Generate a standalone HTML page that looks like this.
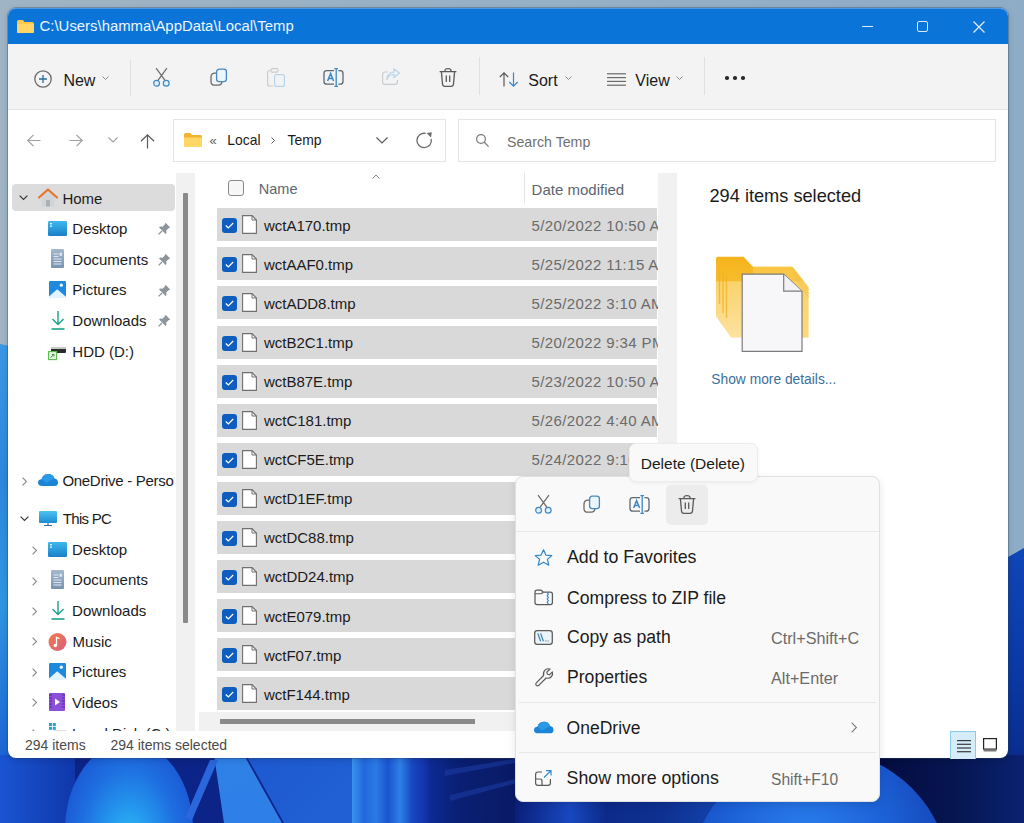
<!DOCTYPE html><html><head><meta charset="utf-8"><style>
*{margin:0;padding:0;box-sizing:border-box}
html,body{width:1024px;height:823px;overflow:hidden}
body{position:relative;font-family:"Liberation Sans",sans-serif;background:#0b3fb0}
.a{position:absolute}
.t{position:absolute;white-space:nowrap}
svg{position:absolute;overflow:visible}
</style></head><body>
<div class="a" style="left:0px;top:0px;width:1024px;height:823px;background:#0b2f98"></div>
<div class="a" style="left:0px;top:330px;width:12px;height:500px;background:linear-gradient(180deg,#3a9ae6 0%,#2b88de 30%,#2f95e2 55%,#1f6ed8 80%,#1448c8 100%)"></div>
<div class="a" style="left:1000px;top:540px;width:24px;height:300px;background:linear-gradient(180deg,#1047b8 0%,#0b3aa6 40%,#0a2e90 70%,#061a5c 100%)"></div>
<div class="a" style="left:0px;top:755px;width:520px;height:70px;background:#0c2488"></div>
<div class="a" style="left:0px;top:755px;width:75px;height:70px;background:linear-gradient(90deg,#1a54d2,#0f38aa)"></div>
<div class="a" style="left:65px;top:742px;width:128px;height:176px;border-radius:50%;background:radial-gradient(ellipse at 50% 62%,#30c8f8 0%,#2498ee 28%,#1e6ee0 55%,#1a52d0 85%)"></div>
<div class="a" style="left:0;top:0;width:1024px;height:823px;background:linear-gradient(160deg,#3a94ee,#2a78e4);clip-path:polygon(214px 755px,244px 755px,282px 823px,224px 823px)"></div>
<div class="a" style="left:0;top:0;width:1024px;height:823px;background:#2a66dc;clip-path:polygon(210px 760px,218px 760px,192px 820px,185px 818px)"></div>
<div class="a" style="left:0;top:0;width:1024px;height:823px;background:linear-gradient(135deg,#0f2ea0 0%,#1a4cc8 40%,#2a80e8 100%);clip-path:polygon(246px 755px,352px 755px,352px 823px,284px 823px)"></div>
<div class="a" style="left:352px;top:755px;width:80px;height:70px;background:linear-gradient(90deg,#3a92ee 0%,#2268dc 15%,#2a7ae6 30%,#1a54d0 45%,#2e80e8 60%,#1848c0 75%,#1438b0 88%,#0c2890 100%)"></div>
<div class="a" style="left:432px;top:755px;width:88px;height:70px;background:linear-gradient(90deg,#0c2a92 0%,#0a1f74 30%,#091a64 100%)"></div>
<div class="a" style="left:0;top:0;width:1024px;height:823px;background:#1a3aa0;opacity:.6;clip-path:polygon(445px 770px,520px 758px,520px 762px,445px 776px)"></div>
<div class="a" style="left:0;top:0;width:1024px;height:823px;background:#1a3aa0;opacity:.6;clip-path:polygon(450px 795px,520px 778px,520px 782px,450px 801px)"></div>
<div class="a" style="left:515px;top:795px;width:365px;height:30px;background:linear-gradient(90deg,#0a1f7a 0%,#1848c0 15%,#0d2a8a 25%,#0e3090 40%,#1a5ad0 75%,#1a5ad0 100%)"></div>
<div class="a" style="left:878px;top:755px;width:146px;height:70px;background:linear-gradient(90deg,#040c40 0%,#061550 50%,#0a2270 100%)"></div>
<div class="a" style="left:690px;top:750px;width:260px;height:260px;border-radius:50%;background:radial-gradient(circle at 45% 35%,#2a80ee 0%,#1d62d8 35%,#1446b8 65%,#0c2f98 100%)"></div>
<div class="a" style="left:0;top:0;width:1024px;height:823px;background:linear-gradient(90deg,#9fb4c4,#8eacc6);clip-path:polygon(0 0,1024px 0,1024px 548px,1008px 557px,0 344px)"></div>
<div class="a" style="left:8px;top:8px;width:1000px;height:750px;border-radius:8px;background:#fff;box-shadow:0 0 0 1px rgba(40,70,100,.35),0 2px 6px rgba(0,0,0,.15)"></div>
<div class="a" style="left:8px;top:8px;width:1000px;height:36px;border-radius:8px 8px 0 0;background:#0b74d8;box-shadow:inset 0 1px 0 rgba(140,190,235,.5)"></div>
<svg style="left:17px;top:20px" width="17" height="13" viewBox="0 0 17 13"><path d="M0 1.5Q0 0 1.5 0H6L7.5 2H15.5Q17 2 17 3.5V11.5Q17 13 15.5 13H1.5Q0 13 0 11.5Z" fill="#f8c84a"/><path d="M0 4H17V11.5Q17 13 15.5 13H1.5Q0 13 0 11.5Z" fill="#ffd666"/></svg>
<div class="t" style="left:39.6px;top:19.39px;font-size:14.9px;line-height:14.9px;color:#eef5fc;">C:\Users\hamma\AppData\Local\Temp</div>
<div class="a" style="left:862px;top:26px;width:11px;height:1.2px;background:#dcecfb"></div>
<div class="a" style="left:917px;top:21px;width:11px;height:11px;border:1.2px solid #dcecfb;border-radius:2px"></div>
<svg style="left:973px;top:21px" width="12" height="12" viewBox="0 0 12 12"><path d="M0.5 0.5L11.5 11.5M11.5 0.5L0.5 11.5" stroke="#dcecfb" stroke-width="1.25"/></svg>
<div class="a" style="left:8px;top:44px;width:1000px;height:66px;background:#f3f3f3;border-bottom:1px solid #e3e3e3"></div>
<svg style="left:34px;top:70px" width="18" height="18" viewBox="0 0 18 18"><circle cx="9" cy="9" r="8.2" fill="none" stroke="#6a6a6a" stroke-width="1.3"/><path d="M9 5V13M5 9H13" stroke="#2c6e98" stroke-width="1.3"/></svg>
<div class="t" style="left:63.4px;top:73.26px;font-size:16px;line-height:16px;color:#1b1b1b;">New</div>
<svg style="left:102px;top:76px" width="7" height="4" viewBox="0 0 7 4"><path d="M0.5 0.5L3.5 3.5L6.5 0.5" fill="none" stroke="#8a8a8a" stroke-width="1"/></svg>
<div class="a" style="left:130px;top:60px;width:1px;height:36px;background:#e0e0e0"></div>
<svg style="left:153px;top:67px" width="17" height="20" viewBox="0 0 17 20"><path d="M3.1 1.2L12.2 13.6M13.9 1.2L4.8 13.6" stroke="#6a6a6a" stroke-width="1.2"/><circle cx="3.6" cy="16.3" r="2.9" fill="#dff1fb" stroke="#3f88c4" stroke-width="1.2"/><circle cx="13.2" cy="16.3" r="2.9" fill="#dff1fb" stroke="#3f88c4" stroke-width="1.2"/></svg>
<svg style="left:210px;top:68px" width="17" height="18" viewBox="0 0 17 18"><path d="M6.2 5.2H5Q1 5.2 1 9.2V13.4Q1 17.2 4.8 17.2H8.3Q11.8 17.2 11.8 13.8" fill="none" stroke="#6a6a6a" stroke-width="1.3"/><rect x="6.6" y="1.2" width="9.8" height="12.4" rx="2.6" fill="#eaf5fd" stroke="#4a88bd" stroke-width="1.3"/></svg>
<svg style="left:267px;top:68px" width="18" height="19" viewBox="0 0 18 19"><path d="M3.5 2.5H2.5Q0.6 2.5 0.6 4.5V16Q0.6 18 2.5 18H6" fill="none" stroke="#c8cdd2" stroke-width="1.2"/><rect x="4" y="0.6" width="7" height="3.5" rx="1.2" fill="none" stroke="#c8cdd2" stroke-width="1.2"/><rect x="7.6" y="6.6" width="9.8" height="11.8" rx="2" fill="none" stroke="#b9d3ea" stroke-width="1.2"/></svg>
<svg style="left:323px;top:68px" width="21" height="19" viewBox="0 0 21 19"><path d="M11 2.6H3.8Q1 2.6 1 5.4V13.4Q1 16.2 3.8 16.2H11M15.4 2.6H17.2Q20 2.6 20 5.4V13.4Q20 16.2 17.2 16.2H15.4" fill="none" stroke="#5f6770" stroke-width="1.3"/><path d="M13.2 0.7V18.3M11.4 0.7H15M11.4 18.3H15" stroke="#3f88c4" stroke-width="1.3"/><path d="M4.6 13L7.6 5.6L10.6 13M5.7 10.5H9.5" fill="none" stroke="#3f88c4" stroke-width="1.5"/></svg>
<svg style="left:382px;top:69px" width="18" height="16" viewBox="0 0 18 16"><path d="M6 3H3Q0.6 3 0.6 5.4V13Q0.6 15.4 3 15.4H13Q15.4 15.4 15.4 13V11" fill="none" stroke="#c8cdd2" stroke-width="1.2"/><path d="M5 11Q6 5.5 12 5.5V8.5L17.4 4L12 0V3Q5 3.5 5 11Z" fill="none" stroke="#b9d3ea" stroke-width="1.2"/></svg>
<svg style="left:439px;top:68px" width="18" height="19" viewBox="0 0 18 19"><path d="M0.6 3.6H17.4M6 3.6V2.5Q6 0.6 9 0.6Q12 0.6 12 2.5V3.6M2.4 3.6L3.5 16Q3.7 18.3 6 18.3H12Q14.3 18.3 14.5 16L15.6 3.6M7.3 7.5V14M10.7 7.5V14" fill="none" stroke="#5a5a5a" stroke-width="1.3"/></svg>
<div class="a" style="left:479px;top:57px;width:1px;height:38px;background:#e0e0e0"></div>
<svg style="left:499px;top:72px" width="20" height="15" viewBox="0 0 20 15"><path d="M5 14.5V0.8M0.8 5L5 0.8L9.2 5" fill="none" stroke="#5a5a5a" stroke-width="1.2"/><path d="M14.5 0.5V14.2M10.3 10L14.5 14.2L18.7 10" fill="none" stroke="#3a86c8" stroke-width="1.2"/></svg>
<div class="t" style="left:528.3px;top:73.26px;font-size:16px;line-height:16px;color:#1b1b1b;">Sort</div>
<svg style="left:565px;top:76px" width="7" height="4" viewBox="0 0 7 4"><path d="M0.5 0.5L3.5 3.5L6.5 0.5" fill="none" stroke="#8a8a8a" stroke-width="1"/></svg>
<svg style="left:607px;top:72.5px" width="19" height="13" viewBox="0 0 19 13"><path d="M0 0.8H19" stroke="#6a6a6a" stroke-width="1.2"/><path d="M0 4.6H19" stroke="#6a6a6a" stroke-width="1.2"/><path d="M0 8.4H19" stroke="#6a6a6a" stroke-width="1.2"/><path d="M0 12.2H19" stroke="#6a6a6a" stroke-width="1.2"/></svg>
<div class="t" style="left:635.3px;top:73.26px;font-size:16px;line-height:16px;color:#1b1b1b;">View</div>
<svg style="left:676px;top:76px" width="7" height="4" viewBox="0 0 7 4"><path d="M0.5 0.5L3.5 3.5L6.5 0.5" fill="none" stroke="#8a8a8a" stroke-width="1"/></svg>
<div class="a" style="left:704px;top:57px;width:1px;height:38px;background:#e0e0e0"></div>
<div class="a" style="left:725px;top:76px;width:3.5px;height:3.5px;border-radius:50%;background:#2a2a2a"></div>
<div class="a" style="left:733px;top:76px;width:3.5px;height:3.5px;border-radius:50%;background:#2a2a2a"></div>
<div class="a" style="left:741px;top:76px;width:3.5px;height:3.5px;border-radius:50%;background:#2a2a2a"></div>
<svg style="left:27px;top:134px" width="14" height="13" viewBox="0 0 14 13"><path d="M13.5 6.5H1M6.5 0.8L0.8 6.5L6.5 12.2" fill="none" stroke="#a0a0a0" stroke-width="1.2"/></svg>
<svg style="left:69px;top:134px" width="14" height="13" viewBox="0 0 14 13"><path d="M0.5 6.5H13M7.5 0.8L13.2 6.5L7.5 12.2" fill="none" stroke="#a0a0a0" stroke-width="1.2"/></svg>
<svg style="left:108px;top:137px" width="10" height="6" viewBox="0 0 10 6"><path d="M0.5 0.5L5 5L9.5 0.5" fill="none" stroke="#a0a0a0" stroke-width="1.1"/></svg>
<svg style="left:140px;top:134px" width="15" height="15" viewBox="0 0 15 15"><path d="M7.5 14.5V1M1 7.2L7.5 0.8L14 7.2" fill="none" stroke="#5a5a5a" stroke-width="1.2"/></svg>
<div class="a" style="left:173px;top:119px;width:273px;height:43px;border:1px solid #e5e5e5;background:#fff"></div>
<svg style="left:184px;top:133px" width="18" height="14" viewBox="0 0 18 14"><path d="M0 1.5Q0 0 1.5 0H6.5L8 2H16.5Q18 2 18 3.5V12.5Q18 14 16.5 14H1.5Q0 14 0 12.5Z" fill="#f2b531"/><path d="M0 4.5H18V12.5Q18 14 16.5 14H1.5Q0 14 0 12.5Z" fill="#ffd766"/></svg>
<div class="t" style="left:209.5px;top:133.50px;font-size:13px;line-height:13px;color:#5a5a5a;">&#171;</div>
<div class="t" style="left:227.3px;top:134.03px;font-size:13.9px;line-height:13.9px;color:#1b1b1b;">Local</div>
<svg style="left:271px;top:137px" width="4" height="7" viewBox="0 0 4 7"><path d="M0.5 0.5L3.5 3.5L0.5 6.5" fill="none" stroke="#5a5a5a" stroke-width="1"/></svg>
<div class="t" style="left:287.5px;top:134.03px;font-size:13.9px;line-height:13.9px;color:#1b1b1b;">Temp</div>
<svg style="left:376px;top:137px" width="12" height="7" viewBox="0 0 12 7"><path d="M0.5 0.5L6 6L11.5 0.5" fill="none" stroke="#5a5a5a" stroke-width="1.2"/></svg>
<svg style="left:416px;top:132px" width="17" height="17" viewBox="0 0 17 17"><path d="M9.6 1.4A7.2 7.2 0 1 0 15.2 7" fill="none" stroke="#6a6a6a" stroke-width="1.3"/><path d="M10.6 0.9L15.8 0.2L15 5.4Z" fill="#6a6a6a"/></svg>
<div class="a" style="left:458px;top:119px;width:538px;height:43px;border:1px solid #e5e5e5;background:#fff"></div>
<svg style="left:476px;top:134px" width="14" height="14" viewBox="0 0 14 14"><circle cx="5" cy="5" r="4.4" fill="none" stroke="#7a7a7a" stroke-width="1.2"/><path d="M8.3 8.3L12.6 12.6" stroke="#7a7a7a" stroke-width="1.3"/></svg>
<div class="t" style="left:507.0px;top:134.98px;font-size:14.2px;line-height:14.2px;color:#707070;">Search Temp</div>
<div class="a" style="left:12px;top:184px;width:163px;height:27px;border-radius:4px;background:#dcdcdc"></div>
<svg style="left:19px;top:195px" width="9" height="5" viewBox="0 0 9 5"><path d="M0.6 0.6L4.5 4.4L8.4 0.6" fill="none" stroke="#3a3a3a" stroke-width="1.3"/></svg>
<svg style="left:38px;top:188px" width="20" height="19" viewBox="0 0 20 19"><path d="M3.5 8.5V17Q3.5 18.5 5 18.5H15Q16.5 18.5 16.5 17V8.5L10 3Z" fill="#d0d4d8"/><rect x="8" y="12" width="4" height="6.5" fill="#a9b0b8"/><path d="M1 9.5L10 1.5L19 9.5" fill="none" stroke="#e8742a" stroke-width="2.2" stroke-linecap="round" stroke-linejoin="round"/></svg>
<div class="t" style="left:62.4px;top:190.70px;font-size:15px;line-height:15px;color:#1b1b1b;">Home</div>
<svg style="left:48px;top:221px" width="19" height="15" viewBox="0 0 19 15"><defs><linearGradient id="dg" x1="0" y1="0" x2="0" y2="1"><stop offset="0" stop-color="#3fb8ee"/><stop offset="1" stop-color="#1a7fc8"/></linearGradient></defs><rect x="0" y="0" width="19" height="15" rx="1.2" fill="url(#dg)"/><rect x="2" y="2" width="2" height="1.3" fill="#e6f6ff"/><rect x="2" y="4.5" width="2" height="1.3" fill="#e6f6ff"/></svg>
<div class="t" style="left:72.3px;top:221.30px;font-size:15px;line-height:15px;color:#1b1b1b;">Desktop</div>
<svg style="left:158px;top:222px" width="13" height="13" viewBox="0 0 13 13"><path d="M7.5 0.8L12.2 5.5L10.5 6.2L8.2 8.5L8.5 11L7.6 11.9L1.1 5.4L2 4.5L4.5 4.8L6.8 2.5Z" fill="#8c949c"/><path d="M4 9L0.6 12.4" stroke="#8c949c" stroke-width="1.3"/></svg>
<svg style="left:51px;top:249px" width="13" height="19" viewBox="0 0 13 19"><defs><linearGradient id="docg" x1="0" y1="0" x2="0" y2="1"><stop offset="0" stop-color="#a3b8cc"/><stop offset="1" stop-color="#7893b2"/></linearGradient></defs><rect x="0" y="0" width="13" height="19" rx="1" fill="url(#docg)"/><path d="M2.5 5H7.5M2.5 7.5H7.5M2.5 10H10.5M2.5 12.5H10.5M2.5 15H10.5" stroke="#dfe8f2" stroke-width="1"/><rect x="8.5" y="3.8" width="2.5" height="3" fill="#dfe8f2"/></svg>
<div class="t" style="left:72.3px;top:251.90px;font-size:15px;line-height:15px;color:#1b1b1b;">Documents</div>
<svg style="left:158px;top:253px" width="13" height="13" viewBox="0 0 13 13"><path d="M7.5 0.8L12.2 5.5L10.5 6.2L8.2 8.5L8.5 11L7.6 11.9L1.1 5.4L2 4.5L4.5 4.8L6.8 2.5Z" fill="#8c949c"/><path d="M4 9L0.6 12.4" stroke="#8c949c" stroke-width="1.3"/></svg>
<svg style="left:48.5px;top:281px" width="17" height="17" viewBox="0 0 17 17"><rect x="0" y="0" width="17" height="17" rx="1.2" fill="#1d8ae0"/><circle cx="12.3" cy="4.2" r="1.6" fill="#fff"/><path d="M0 17V15.5L8.2 8.2L17 15.8V17Z" fill="#e2f4ff"/></svg>
<div class="t" style="left:72.3px;top:282.10px;font-size:15px;line-height:15px;color:#1b1b1b;">Pictures</div>
<svg style="left:158px;top:284px" width="13" height="13" viewBox="0 0 13 13"><path d="M7.5 0.8L12.2 5.5L10.5 6.2L8.2 8.5L8.5 11L7.6 11.9L1.1 5.4L2 4.5L4.5 4.8L6.8 2.5Z" fill="#8c949c"/><path d="M4 9L0.6 12.4" stroke="#8c949c" stroke-width="1.3"/></svg>
<svg style="left:50.5px;top:311px" width="14" height="19" viewBox="0 0 14 19"><path d="M7 0V13.5M1.5 8L7 13.5L12.5 8" fill="none" stroke="#1aa38a" stroke-width="1.4"/><path d="M0.5 18H13.5" stroke="#1aa38a" stroke-width="1.6"/></svg>
<div class="t" style="left:72.3px;top:312.80px;font-size:15px;line-height:15px;color:#1b1b1b;">Downloads</div>
<svg style="left:158px;top:314px" width="13" height="13" viewBox="0 0 13 13"><path d="M7.5 0.8L12.2 5.5L10.5 6.2L8.2 8.5L8.5 11L7.6 11.9L1.1 5.4L2 4.5L4.5 4.8L6.8 2.5Z" fill="#8c949c"/><path d="M4 9L0.6 12.4" stroke="#8c949c" stroke-width="1.3"/></svg>
<svg style="left:48px;top:347px" width="18" height="13" viewBox="0 0 18 13"><rect x="3" y="1" width="15" height="5" rx="1" fill="#2b2b2b"/><rect x="3" y="0" width="15" height="2" fill="#c8c8c8"/><rect x="0.6" y="4.6" width="8" height="8" fill="#e9f7e6" stroke="#5bb84a" stroke-width="1.1"/><path d="M2.5 10.5L6 7.5M4 7.5H6V9.5" fill="none" stroke="#2e8a2a" stroke-width="0.9"/></svg>
<div class="t" style="left:72.3px;top:343.50px;font-size:15px;line-height:15px;color:#1b1b1b;">HDD (D:)</div>
<svg style="left:22px;top:477px" width="5" height="9" viewBox="0 0 5 9"><path d="M0.6 0.6L4.4 4.5L0.6 8.4" fill="none" stroke="#8a8a8a" stroke-width="1.1"/></svg>
<svg style="left:38px;top:474px" width="20" height="12" viewBox="0 0 20 12"><path d="M4.5 12Q0 12 0 8.5Q0 5.5 3.5 5.2Q5 0 10.5 0Q15 0 16.5 4.5Q20 5 20 8.5Q20 12 16.5 12Z" fill="#1c84d6"/><path d="M3.5 5.2Q5 0 10.5 0Q15 0 16.5 4.5L8 9Z" fill="#2a9ae6"/></svg>
<div class="t" style="left:62.4px;top:473.20px;font-size:15px;line-height:15px;color:#1b1b1b;letter-spacing:-0.3px;width:112px;overflow:hidden;">OneDrive - Perso</div>
<svg style="left:19.5px;top:515.5px" width="9" height="5" viewBox="0 0 9 5"><path d="M0.6 0.6L4.5 4.4L8.4 0.6" fill="none" stroke="#3a3a3a" stroke-width="1.3"/></svg>
<svg style="left:38.6px;top:511px" width="18" height="15" viewBox="0 0 18 15"><defs><linearGradient id="pcg" x1="0" y1="0" x2="0" y2="1"><stop offset="0" stop-color="#4cc4f0"/><stop offset="1" stop-color="#1f8ad2"/></linearGradient></defs><rect x="0" y="0" width="18" height="12" rx="1" fill="url(#pcg)"/><path d="M9 12V14.5M5 14.5H13" stroke="#3a6f96" stroke-width="1.2"/></svg>
<div class="t" style="left:62.8px;top:511.10px;font-size:15px;line-height:15px;color:#1b1b1b;letter-spacing:-0.7px;">This PC</div>
<svg style="left:31.5px;top:546px" width="5" height="9" viewBox="0 0 5 9"><path d="M0.6 0.6L4.4 4.5L0.6 8.4" fill="none" stroke="#8a8a8a" stroke-width="1.1"/></svg>
<svg style="left:48px;top:542px" width="19" height="15" viewBox="0 0 19 15"><defs><linearGradient id="dg" x1="0" y1="0" x2="0" y2="1"><stop offset="0" stop-color="#3fb8ee"/><stop offset="1" stop-color="#1a7fc8"/></linearGradient></defs><rect x="0" y="0" width="19" height="15" rx="1.2" fill="url(#dg)"/><rect x="2" y="2" width="2" height="1.3" fill="#e6f6ff"/><rect x="2" y="4.5" width="2" height="1.3" fill="#e6f6ff"/></svg>
<div class="t" style="left:72.1px;top:541.80px;font-size:15px;line-height:15px;color:#1b1b1b;">Desktop</div>
<svg style="left:31.5px;top:577px" width="5" height="9" viewBox="0 0 5 9"><path d="M0.6 0.6L4.4 4.5L0.6 8.4" fill="none" stroke="#8a8a8a" stroke-width="1.1"/></svg>
<svg style="left:51px;top:570px" width="13" height="19" viewBox="0 0 13 19"><defs><linearGradient id="docg" x1="0" y1="0" x2="0" y2="1"><stop offset="0" stop-color="#a3b8cc"/><stop offset="1" stop-color="#7893b2"/></linearGradient></defs><rect x="0" y="0" width="13" height="19" rx="1" fill="url(#docg)"/><path d="M2.5 5H7.5M2.5 7.5H7.5M2.5 10H10.5M2.5 12.5H10.5M2.5 15H10.5" stroke="#dfe8f2" stroke-width="1"/><rect x="8.5" y="3.8" width="2.5" height="3" fill="#dfe8f2"/></svg>
<div class="t" style="left:72.1px;top:572.30px;font-size:15px;line-height:15px;color:#1b1b1b;">Documents</div>
<svg style="left:31.5px;top:607px" width="5" height="9" viewBox="0 0 5 9"><path d="M0.6 0.6L4.4 4.5L0.6 8.4" fill="none" stroke="#8a8a8a" stroke-width="1.1"/></svg>
<svg style="left:50.5px;top:601px" width="14" height="19" viewBox="0 0 14 19"><path d="M7 0V13.5M1.5 8L7 13.5L12.5 8" fill="none" stroke="#1aa38a" stroke-width="1.4"/><path d="M0.5 18H13.5" stroke="#1aa38a" stroke-width="1.6"/></svg>
<div class="t" style="left:72.1px;top:603.00px;font-size:15px;line-height:15px;color:#1b1b1b;">Downloads</div>
<svg style="left:31.5px;top:637px" width="5" height="9" viewBox="0 0 5 9"><path d="M0.6 0.6L4.4 4.5L0.6 8.4" fill="none" stroke="#8a8a8a" stroke-width="1.1"/></svg>
<svg style="left:47.6px;top:632.5px" width="19" height="18" viewBox="0 0 19 18"><defs><linearGradient id="mg" x1="0" y1="0" x2="1" y2="1"><stop offset="0" stop-color="#f07a4a"/><stop offset="1" stop-color="#d8607e"/></linearGradient></defs><circle cx="9.5" cy="9" r="9" fill="url(#mg)"/><path d="M8.5 12.5V4.5L11.5 5.5" fill="none" stroke="#fff" stroke-width="1.3"/><circle cx="7.3" cy="12.5" r="1.7" fill="#fff"/></svg>
<div class="t" style="left:72.6px;top:634.00px;font-size:15px;line-height:15px;color:#1b1b1b;">Music</div>
<svg style="left:31.5px;top:668px" width="5" height="9" viewBox="0 0 5 9"><path d="M0.6 0.6L4.4 4.5L0.6 8.4" fill="none" stroke="#8a8a8a" stroke-width="1.1"/></svg>
<svg style="left:48.5px;top:663px" width="17" height="17" viewBox="0 0 17 17"><rect x="0" y="0" width="17" height="17" rx="1.2" fill="#1d8ae0"/><circle cx="12.3" cy="4.2" r="1.6" fill="#fff"/><path d="M0 17V15.5L8.2 8.2L17 15.8V17Z" fill="#e2f4ff"/></svg>
<div class="t" style="left:72.1px;top:664.30px;font-size:15px;line-height:15px;color:#1b1b1b;">Pictures</div>
<svg style="left:31.5px;top:698px" width="5" height="9" viewBox="0 0 5 9"><path d="M0.6 0.6L4.4 4.5L0.6 8.4" fill="none" stroke="#8a8a8a" stroke-width="1.1"/></svg>
<svg style="left:49px;top:692.5px" width="16" height="18" viewBox="0 0 16 18"><rect x="0" y="0" width="16" height="18" rx="1" fill="#8b4fd8"/><path d="M0 2H3M0 5H3M0 8H3M0 11H3M0 14H3M13 2H16M13 5H16M13 8H16M13 11H16M13 14H16" stroke="#5d2aa8" stroke-width="1.2"/><path d="M6 5.5V12.5L11 9Z" fill="#fff"/></svg>
<div class="t" style="left:72.1px;top:695.30px;font-size:15px;line-height:15px;color:#1b1b1b;">Videos</div>
<div class="a" style="left:10px;top:712px;width:165px;height:19px;overflow:hidden"><svg style="left:21.5px;top:17px" width="5" height="9" viewBox="0 0 5 9"><path d="M0.6 0.6L4.4 4.5L0.6 8.4" fill="none" stroke="#8a8a8a" stroke-width="1.1"/></svg>
<svg style="left:39px;top:11px" width="20" height="15" viewBox="0 0 20 15"><rect x="0" y="0" width="3" height="3" fill="#2a9fd0"/><rect x="3.8" y="0" width="3" height="3" fill="#2a9fd0"/><rect x="0" y="3.8" width="3" height="3" fill="#2a9fd0"/><rect x="3.8" y="3.8" width="3" height="3" fill="#2a9fd0"/><rect x="4" y="7" width="14" height="8" rx="2" fill="#d8dde2"/></svg>
<div class="t" style="left:62.1px;top:13.80px;font-size:15px;line-height:15px;color:#1b1b1b;">Local Disk (C:)</div>
</div>
<div class="a" style="left:176px;top:173px;width:19px;height:558px;background:#f1f1f1"></div>
<div class="a" style="left:183px;top:193px;width:5px;height:430px;background:#8a8a8a;border-radius:1px"></div>
<div class="a" style="left:228px;top:180px;width:16px;height:16px;border:1px solid #8a8a8a;border-radius:3px;background:#f6f6f6"></div>
<div class="t" style="left:258.8px;top:182.43px;font-size:14.5px;line-height:14.5px;color:#5c6670;">Name</div>
<svg style="left:372px;top:174px" width="8" height="5" viewBox="0 0 8 5"><path d="M0.5 4.5L4 1L7.5 4.5" fill="none" stroke="#8a8a8a" stroke-width="1"/></svg>
<div class="a" style="left:524px;top:173px;width:1px;height:30px;background:#e5e5e5"></div>
<div class="t" style="left:531.6px;top:182.00px;font-size:15px;line-height:15px;color:#5c6670;">Date modified</div>
<div class="a" style="left:217px;top:208px;width:440px;height:33px;background:#d9d9d9"></div>
<div class="a" style="left:222px;top:218px;width:15px;height:15px;border-radius:3px;background:#0f5dbf"></div>
<svg style="left:225px;top:222px" width="9" height="7" viewBox="0 0 9 7"><path d="M0.8 3.5L3.3 6L8.2 1" fill="none" stroke="#fff" stroke-width="1.2"/></svg>
<svg style="left:242px;top:215px" width="15" height="19" viewBox="0 0 15 19"><path d="M0.6 0.6H10L14.4 5V18.4H0.6Z" fill="#fff" stroke="#707070" stroke-width="1.1"/><path d="M10 0.6V5H14.4" fill="none" stroke="#707070" stroke-width="1"/></svg>
<div class="t" style="left:263.9px;top:217.50px;font-size:15px;line-height:15px;color:#1b1b1b;">wctA170.tmp</div>
<div class="t" style="left:531.6px;top:217.50px;font-size:15px;line-height:15px;color:#6b6b6b;letter-spacing:0.38px;width:126px;overflow:hidden;">5/20/2022 10:50 AM</div>
<div class="a" style="left:217px;top:247px;width:440px;height:33px;background:#d9d9d9"></div>
<div class="a" style="left:222px;top:257px;width:15px;height:15px;border-radius:3px;background:#0f5dbf"></div>
<svg style="left:225px;top:261px" width="9" height="7" viewBox="0 0 9 7"><path d="M0.8 3.5L3.3 6L8.2 1" fill="none" stroke="#fff" stroke-width="1.2"/></svg>
<svg style="left:242px;top:254px" width="15" height="19" viewBox="0 0 15 19"><path d="M0.6 0.6H10L14.4 5V18.4H0.6Z" fill="#fff" stroke="#707070" stroke-width="1.1"/><path d="M10 0.6V5H14.4" fill="none" stroke="#707070" stroke-width="1"/></svg>
<div class="t" style="left:263.9px;top:256.60px;font-size:15px;line-height:15px;color:#1b1b1b;">wctAAF0.tmp</div>
<div class="t" style="left:531.6px;top:256.60px;font-size:15px;line-height:15px;color:#6b6b6b;letter-spacing:0.38px;width:126px;overflow:hidden;">5/25/2022 11:15 AM</div>
<div class="a" style="left:217px;top:286px;width:440px;height:33px;background:#d9d9d9"></div>
<div class="a" style="left:222px;top:296px;width:15px;height:15px;border-radius:3px;background:#0f5dbf"></div>
<svg style="left:225px;top:300px" width="9" height="7" viewBox="0 0 9 7"><path d="M0.8 3.5L3.3 6L8.2 1" fill="none" stroke="#fff" stroke-width="1.2"/></svg>
<svg style="left:242px;top:293px" width="15" height="19" viewBox="0 0 15 19"><path d="M0.6 0.6H10L14.4 5V18.4H0.6Z" fill="#fff" stroke="#707070" stroke-width="1.1"/><path d="M10 0.6V5H14.4" fill="none" stroke="#707070" stroke-width="1"/></svg>
<div class="t" style="left:263.9px;top:295.70px;font-size:15px;line-height:15px;color:#1b1b1b;">wctADD8.tmp</div>
<div class="t" style="left:531.6px;top:295.70px;font-size:15px;line-height:15px;color:#6b6b6b;letter-spacing:0.38px;width:126px;overflow:hidden;">5/25/2022 3:10 AM</div>
<div class="a" style="left:217px;top:326px;width:440px;height:33px;background:#d9d9d9"></div>
<div class="a" style="left:222px;top:336px;width:15px;height:15px;border-radius:3px;background:#0f5dbf"></div>
<svg style="left:225px;top:340px" width="9" height="7" viewBox="0 0 9 7"><path d="M0.8 3.5L3.3 6L8.2 1" fill="none" stroke="#fff" stroke-width="1.2"/></svg>
<svg style="left:242px;top:333px" width="15" height="19" viewBox="0 0 15 19"><path d="M0.6 0.6H10L14.4 5V18.4H0.6Z" fill="#fff" stroke="#707070" stroke-width="1.1"/><path d="M10 0.6V5H14.4" fill="none" stroke="#707070" stroke-width="1"/></svg>
<div class="t" style="left:263.9px;top:334.80px;font-size:15px;line-height:15px;color:#1b1b1b;">wctB2C1.tmp</div>
<div class="t" style="left:531.6px;top:334.80px;font-size:15px;line-height:15px;color:#6b6b6b;letter-spacing:0.38px;width:126px;overflow:hidden;">5/20/2022 9:34 PM</div>
<div class="a" style="left:217px;top:365px;width:440px;height:33px;background:#d9d9d9"></div>
<div class="a" style="left:222px;top:375px;width:15px;height:15px;border-radius:3px;background:#0f5dbf"></div>
<svg style="left:225px;top:379px" width="9" height="7" viewBox="0 0 9 7"><path d="M0.8 3.5L3.3 6L8.2 1" fill="none" stroke="#fff" stroke-width="1.2"/></svg>
<svg style="left:242px;top:372px" width="15" height="19" viewBox="0 0 15 19"><path d="M0.6 0.6H10L14.4 5V18.4H0.6Z" fill="#fff" stroke="#707070" stroke-width="1.1"/><path d="M10 0.6V5H14.4" fill="none" stroke="#707070" stroke-width="1"/></svg>
<div class="t" style="left:263.9px;top:373.90px;font-size:15px;line-height:15px;color:#1b1b1b;">wctB87E.tmp</div>
<div class="t" style="left:531.6px;top:373.90px;font-size:15px;line-height:15px;color:#6b6b6b;letter-spacing:0.38px;width:126px;overflow:hidden;">5/23/2022 10:50 AM</div>
<div class="a" style="left:217px;top:404px;width:440px;height:33px;background:#d9d9d9"></div>
<div class="a" style="left:222px;top:414px;width:15px;height:15px;border-radius:3px;background:#0f5dbf"></div>
<svg style="left:225px;top:418px" width="9" height="7" viewBox="0 0 9 7"><path d="M0.8 3.5L3.3 6L8.2 1" fill="none" stroke="#fff" stroke-width="1.2"/></svg>
<svg style="left:242px;top:411px" width="15" height="19" viewBox="0 0 15 19"><path d="M0.6 0.6H10L14.4 5V18.4H0.6Z" fill="#fff" stroke="#707070" stroke-width="1.1"/><path d="M10 0.6V5H14.4" fill="none" stroke="#707070" stroke-width="1"/></svg>
<div class="t" style="left:263.9px;top:413.00px;font-size:15px;line-height:15px;color:#1b1b1b;">wctC181.tmp</div>
<div class="t" style="left:531.6px;top:413.00px;font-size:15px;line-height:15px;color:#6b6b6b;letter-spacing:0.38px;width:126px;overflow:hidden;">5/26/2022 4:40 AM</div>
<div class="a" style="left:217px;top:443px;width:440px;height:33px;background:#d9d9d9"></div>
<div class="a" style="left:222px;top:453px;width:15px;height:15px;border-radius:3px;background:#0f5dbf"></div>
<svg style="left:225px;top:457px" width="9" height="7" viewBox="0 0 9 7"><path d="M0.8 3.5L3.3 6L8.2 1" fill="none" stroke="#fff" stroke-width="1.2"/></svg>
<svg style="left:242px;top:450px" width="15" height="19" viewBox="0 0 15 19"><path d="M0.6 0.6H10L14.4 5V18.4H0.6Z" fill="#fff" stroke="#707070" stroke-width="1.1"/><path d="M10 0.6V5H14.4" fill="none" stroke="#707070" stroke-width="1"/></svg>
<div class="t" style="left:263.9px;top:452.10px;font-size:15px;line-height:15px;color:#1b1b1b;">wctCF5E.tmp</div>
<div class="t" style="left:531.6px;top:452.10px;font-size:15px;line-height:15px;color:#6b6b6b;letter-spacing:0.38px;width:126px;overflow:hidden;">5/24/2022 9:10 AM</div>
<div class="a" style="left:217px;top:482px;width:440px;height:33px;background:#d9d9d9"></div>
<div class="a" style="left:222px;top:492px;width:15px;height:15px;border-radius:3px;background:#0f5dbf"></div>
<svg style="left:225px;top:496px" width="9" height="7" viewBox="0 0 9 7"><path d="M0.8 3.5L3.3 6L8.2 1" fill="none" stroke="#fff" stroke-width="1.2"/></svg>
<svg style="left:242px;top:489px" width="15" height="19" viewBox="0 0 15 19"><path d="M0.6 0.6H10L14.4 5V18.4H0.6Z" fill="#fff" stroke="#707070" stroke-width="1.1"/><path d="M10 0.6V5H14.4" fill="none" stroke="#707070" stroke-width="1"/></svg>
<div class="t" style="left:263.9px;top:491.20px;font-size:15px;line-height:15px;color:#1b1b1b;">wctD1EF.tmp</div>
<div class="a" style="left:217px;top:521px;width:440px;height:33px;background:#d9d9d9"></div>
<div class="a" style="left:222px;top:531px;width:15px;height:15px;border-radius:3px;background:#0f5dbf"></div>
<svg style="left:225px;top:535px" width="9" height="7" viewBox="0 0 9 7"><path d="M0.8 3.5L3.3 6L8.2 1" fill="none" stroke="#fff" stroke-width="1.2"/></svg>
<svg style="left:242px;top:528px" width="15" height="19" viewBox="0 0 15 19"><path d="M0.6 0.6H10L14.4 5V18.4H0.6Z" fill="#fff" stroke="#707070" stroke-width="1.1"/><path d="M10 0.6V5H14.4" fill="none" stroke="#707070" stroke-width="1"/></svg>
<div class="t" style="left:263.9px;top:530.30px;font-size:15px;line-height:15px;color:#1b1b1b;">wctDC88.tmp</div>
<div class="a" style="left:217px;top:560px;width:440px;height:33px;background:#d9d9d9"></div>
<div class="a" style="left:222px;top:570px;width:15px;height:15px;border-radius:3px;background:#0f5dbf"></div>
<svg style="left:225px;top:574px" width="9" height="7" viewBox="0 0 9 7"><path d="M0.8 3.5L3.3 6L8.2 1" fill="none" stroke="#fff" stroke-width="1.2"/></svg>
<svg style="left:242px;top:567px" width="15" height="19" viewBox="0 0 15 19"><path d="M0.6 0.6H10L14.4 5V18.4H0.6Z" fill="#fff" stroke="#707070" stroke-width="1.1"/><path d="M10 0.6V5H14.4" fill="none" stroke="#707070" stroke-width="1"/></svg>
<div class="t" style="left:263.9px;top:569.40px;font-size:15px;line-height:15px;color:#1b1b1b;">wctDD24.tmp</div>
<div class="a" style="left:217px;top:599px;width:440px;height:33px;background:#d9d9d9"></div>
<div class="a" style="left:222px;top:609px;width:15px;height:15px;border-radius:3px;background:#0f5dbf"></div>
<svg style="left:225px;top:613px" width="9" height="7" viewBox="0 0 9 7"><path d="M0.8 3.5L3.3 6L8.2 1" fill="none" stroke="#fff" stroke-width="1.2"/></svg>
<svg style="left:242px;top:606px" width="15" height="19" viewBox="0 0 15 19"><path d="M0.6 0.6H10L14.4 5V18.4H0.6Z" fill="#fff" stroke="#707070" stroke-width="1.1"/><path d="M10 0.6V5H14.4" fill="none" stroke="#707070" stroke-width="1"/></svg>
<div class="t" style="left:263.9px;top:608.50px;font-size:15px;line-height:15px;color:#1b1b1b;">wctE079.tmp</div>
<div class="a" style="left:217px;top:638px;width:440px;height:33px;background:#d9d9d9"></div>
<div class="a" style="left:222px;top:648px;width:15px;height:15px;border-radius:3px;background:#0f5dbf"></div>
<svg style="left:225px;top:652px" width="9" height="7" viewBox="0 0 9 7"><path d="M0.8 3.5L3.3 6L8.2 1" fill="none" stroke="#fff" stroke-width="1.2"/></svg>
<svg style="left:242px;top:645px" width="15" height="19" viewBox="0 0 15 19"><path d="M0.6 0.6H10L14.4 5V18.4H0.6Z" fill="#fff" stroke="#707070" stroke-width="1.1"/><path d="M10 0.6V5H14.4" fill="none" stroke="#707070" stroke-width="1"/></svg>
<div class="t" style="left:263.9px;top:647.60px;font-size:15px;line-height:15px;color:#1b1b1b;">wctF07.tmp</div>
<div class="a" style="left:217px;top:677px;width:440px;height:33px;background:#d9d9d9"></div>
<div class="a" style="left:222px;top:687px;width:15px;height:15px;border-radius:3px;background:#0f5dbf"></div>
<svg style="left:225px;top:691px" width="9" height="7" viewBox="0 0 9 7"><path d="M0.8 3.5L3.3 6L8.2 1" fill="none" stroke="#fff" stroke-width="1.2"/></svg>
<svg style="left:242px;top:684px" width="15" height="19" viewBox="0 0 15 19"><path d="M0.6 0.6H10L14.4 5V18.4H0.6Z" fill="#fff" stroke="#707070" stroke-width="1.1"/><path d="M10 0.6V5H14.4" fill="none" stroke="#707070" stroke-width="1"/></svg>
<div class="t" style="left:263.9px;top:686.70px;font-size:15px;line-height:15px;color:#1b1b1b;">wctF144.tmp</div>
<div class="a" style="left:199px;top:712px;width:458px;height:19px;background:#f1f1f1"></div>
<div class="a" style="left:220px;top:719px;width:255px;height:5px;background:#8a8a8a"></div>
<div class="a" style="left:658px;top:173px;width:19px;height:540px;background:#f1f1f1"></div>
<div class="t" style="left:709.5px;top:187.09px;font-size:18.2px;line-height:18.2px;color:#1b1b1b;">294 items selected</div>
<svg style="left:715px;top:256px" width="94" height="97" viewBox="0 0 94 97"><defs><linearGradient id="fg" x1="0" y1="0" x2="0" y2="1"><stop offset="0" stop-color="#f5b31c"/><stop offset="0.3" stop-color="#f7bd2c"/><stop offset="0.31" stop-color="#fad36c"/><stop offset="1" stop-color="#fde2a0"/></linearGradient></defs>
<path d="M1 2.5Q1 0.7 3 0.7H28.5L38 10.7H77.5L93.5 31V81.6H16L1 60.5Z" fill="url(#fg)"/>
<path d="M38 10.7H77.5L93.5 31V81.6H30V29H38Z" fill="#fbd25e" opacity=".55"/>
<path d="M78 14.5L93.5 34M79 18.5L93.5 37.5M80 22.5L93.5 41" stroke="#f3c04a" stroke-width="1"/>
<path d="M4.5 12V48M8 16V57M11.5 20V62" stroke="#f2b326" stroke-width="1.4" opacity=".8"/>
<path d="M27.2 18.2H68.7L87 35.2V95.4H27.2Z" fill="#f7f7f9" stroke="#7c7c80" stroke-width="1.2"/>
<path d="M68.7 18.2V35.2H87" fill="#f2f2f4" stroke="#7c7c80" stroke-width="1.2"/></svg>
<div class="t" style="left:711.3px;top:373.02px;font-size:13.8px;line-height:13.8px;color:#3b6f9c;">Show more details...</div>
<div class="t" style="left:25.0px;top:738.45px;font-size:14px;line-height:14px;color:#4a4a4a;">294 items</div>
<div class="t" style="left:110.4px;top:738.45px;font-size:14px;line-height:14px;color:#4a4a4a;">294 items selected</div>
<div class="a" style="left:950px;top:731px;width:26px;height:28px;background:#d5ecf9;border:1px solid #8ccbe8;border-bottom:none"></div>
<svg style="left:957px;top:740px" width="14" height="12" viewBox="0 0 14 12"><path d="M0 0.6H14" stroke="#3a3a3a" stroke-width="1.2"/><path d="M0 4.3H14" stroke="#3a3a3a" stroke-width="1.2"/><path d="M0 8.0H14" stroke="#3a3a3a" stroke-width="1.2"/><path d="M0 11.7H14" stroke="#3a3a3a" stroke-width="1.2"/></svg>
<svg style="left:983px;top:738px" width="14" height="14" viewBox="0 0 14 14"><rect x="0.6" y="0.6" width="12.8" height="10.5" fill="#fff" stroke="#222" stroke-width="1.2"/><path d="M0.6 12.5H13.4" stroke="#777" stroke-width="2"/></svg>
<div class="a" style="left:515px;top:476px;width:365px;height:326px;background:#f9f9f9;border:1px solid #e0e0e0;border-radius:8px;box-shadow:0 3px 8px rgba(0,0,0,.10)"></div>
<div class="a" style="left:666px;top:485px;width:42px;height:40px;background:#ececec;border-radius:5px"></div>
<svg style="left:535px;top:494px" width="17" height="20" viewBox="0 0 17 20"><path d="M3.1 1.2L12.2 13.6M13.9 1.2L4.8 13.6" stroke="#6a6a6a" stroke-width="1.2"/><circle cx="3.6" cy="16.3" r="2.9" fill="#dff1fb" stroke="#3f88c4" stroke-width="1.2"/><circle cx="13.2" cy="16.3" r="2.9" fill="#dff1fb" stroke="#3f88c4" stroke-width="1.2"/></svg>
<svg style="left:583px;top:495px" width="17" height="18" viewBox="0 0 17 18"><path d="M6.2 5.2H5Q1 5.2 1 9.2V13.4Q1 17.2 4.8 17.2H8.3Q11.8 17.2 11.8 13.8" fill="none" stroke="#6a6a6a" stroke-width="1.3"/><rect x="6.6" y="1.2" width="9.8" height="12.4" rx="2.6" fill="#eaf5fd" stroke="#4a88bd" stroke-width="1.3"/></svg>
<svg style="left:629px;top:495px" width="21" height="19" viewBox="0 0 21 19"><path d="M11 2.6H3.8Q1 2.6 1 5.4V13.4Q1 16.2 3.8 16.2H11M15.4 2.6H17.2Q20 2.6 20 5.4V13.4Q20 16.2 17.2 16.2H15.4" fill="none" stroke="#5f6770" stroke-width="1.3"/><path d="M13.2 0.7V18.3M11.4 0.7H15M11.4 18.3H15" stroke="#3f88c4" stroke-width="1.3"/><path d="M4.6 13L7.6 5.6L10.6 13M5.7 10.5H9.5" fill="none" stroke="#3f88c4" stroke-width="1.5"/></svg>
<svg style="left:678px;top:495px" width="18" height="19" viewBox="0 0 18 19"><path d="M0.6 3.6H17.4M6 3.6V2.5Q6 0.6 9 0.6Q12 0.6 12 2.5V3.6M2.4 3.6L3.5 16Q3.7 18.3 6 18.3H12Q14.3 18.3 14.5 16L15.6 3.6M7.3 7.5V14M10.7 7.5V14" fill="none" stroke="#5a5a5a" stroke-width="1.3"/></svg>
<div class="a" style="left:516px;top:531px;width:363px;height:1px;background:#e8e8e8"></div>
<svg style="left:534px;top:549px" width="19" height="17" viewBox="0 0 19 17"><path d="M9.5 0.8L12 6.2L17.8 6.6L13.4 10.4L14.8 16.2L9.5 13.2L4.2 16.2L5.6 10.4L1.2 6.6L7 6.2Z" fill="none" stroke="#2f86c8" stroke-width="1.2" stroke-linejoin="round"/></svg>
<div class="t" style="left:567.0px;top:548.93px;font-size:17.8px;line-height:17.8px;color:#1b1b1b;">Add to Favorites</div>
<svg style="left:534px;top:589px" width="19" height="17" viewBox="0 0 19 17"><path d="M1 13.5V3Q1 1 3 1H6.3Q7.3 1 8 1.8L9.2 3.2H16.4Q18.4 3.2 18.4 5.2V13.6Q18.4 15.6 16.4 15.6H3Q1 15.6 1 13.5Z" fill="none" stroke="#5a5a5a" stroke-width="1.25"/><path d="M1 4.8H7.2L9.2 3.2" fill="none" stroke="#5a5a5a" stroke-width="1.1"/><path d="M13.2 3.6L14.4 5.2L13.2 6.8L14.4 8.4L13.2 10L14.4 11.6L13.2 13.2L14.4 14.8" fill="none" stroke="#2f86c8" stroke-width="1.1"/></svg>
<div class="t" style="left:567.0px;top:589.70px;font-size:17.6px;line-height:17.6px;color:#1b1b1b;">Compress to ZIP file</div>
<svg style="left:534px;top:630px" width="19" height="15" viewBox="0 0 19 15"><rect x="0.7" y="0.7" width="17.6" height="13.6" rx="2.6" fill="#e9f4fb" stroke="#5a5a5a" stroke-width="1.25"/><path d="M3.8 3.4L6.6 11.2M6.6 3.4L9.4 11.2" stroke="#3a7eaa" stroke-width="1.2"/><path d="M11.3 11H12.3M13.6 11H14.6" stroke="#5a5a5a" stroke-width="1.2"/></svg>
<div class="t" style="left:567.0px;top:629.20px;font-size:17.6px;line-height:17.6px;color:#1b1b1b;">Copy as path</div>
<div class="t" style="left:771.0px;top:630.19px;font-size:16.2px;line-height:16.2px;color:#6b6b6b;">Ctrl+Shift+C</div>
<svg style="left:534px;top:668px" width="19" height="19" viewBox="0 0 19 19"><path d="M2.3 14.8L9.6 7.5Q8.8 4 11.2 1.9Q13.4 0.2 16 1L12.8 4.2L13.4 6.2L15.4 6.8L18.4 3.8Q19.1 6.5 17.5 8.5Q15.4 10.9 12.1 10L4.8 17.3Q3.5 18.5 2.3 17.3Q1.1 16 2.3 14.8Z" fill="none" stroke="#5a5a5a" stroke-width="1.2" stroke-linejoin="round"/></svg>
<div class="t" style="left:567.0px;top:668.80px;font-size:17.6px;line-height:17.6px;color:#1b1b1b;">Properties</div>
<div class="t" style="left:771.0px;top:670.49px;font-size:16.2px;line-height:16.2px;color:#6b6b6b;">Alt+Enter</div>
<div class="a" style="left:519px;top:702px;width:357px;height:1px;background:#e8e8e8"></div>
<svg style="left:534px;top:721px" width="19.5" height="13" viewBox="0 0 20 12"><path d="M4.5 12Q0 12 0 8.5Q0 5.5 3.5 5.2Q5 0 10.5 0Q15 0 16.5 4.5Q20 5 20 8.5Q20 12 16.5 12Z" fill="#1c84d6"/><path d="M3.5 5.2Q5 0 10.5 0Q15 0 16.5 4.5L8 9Z" fill="#2a9ae6"/></svg>
<div class="t" style="left:566.6px;top:719.79px;font-size:17.5px;line-height:17.5px;color:#1b1b1b;">OneDrive</div>
<svg style="left:851px;top:722px" width="6" height="11" viewBox="0 0 6 11"><path d="M0.6 0.6L5.4 5.5L0.6 10.4" fill="none" stroke="#7a7a7a" stroke-width="1.1"/></svg>
<div class="a" style="left:519px;top:752px;width:357px;height:1px;background:#e8e8e8"></div>
<svg style="left:535px;top:770px" width="17" height="16" viewBox="0 0 17 16"><path d="M7 2H3Q0.6 2 0.6 4.4V13Q0.6 15.4 3 15.4H13Q15.4 15.4 15.4 13V9" fill="none" stroke="#5a5a5a" stroke-width="1.2"/><path d="M0.6 9H5Q7 9 7 11V15.4" fill="none" stroke="#5a5a5a" stroke-width="1.2"/><path d="M9 7.5L16 0.6M11 0.6H16V5.5" fill="none" stroke="#2f86c8" stroke-width="1.2"/></svg>
<div class="t" style="left:566.6px;top:770.03px;font-size:17.8px;line-height:17.8px;color:#1b1b1b;">Show more options</div>
<div class="t" style="left:771.0px;top:771.79px;font-size:15.6px;line-height:15.6px;color:#6b6b6b;">Shift+F10</div>
<div class="a" style="left:629px;top:443px;width:129px;height:39px;background:#f9f9f9;border:1px solid #ececec;border-radius:7px;box-shadow:0 1px 4px rgba(0,0,0,.06)"></div>
<div class="t" style="left:640.8px;top:456.18px;font-size:15.5px;line-height:15.5px;color:#1b1b1b;">Delete (Delete)</div>
</body></html>
